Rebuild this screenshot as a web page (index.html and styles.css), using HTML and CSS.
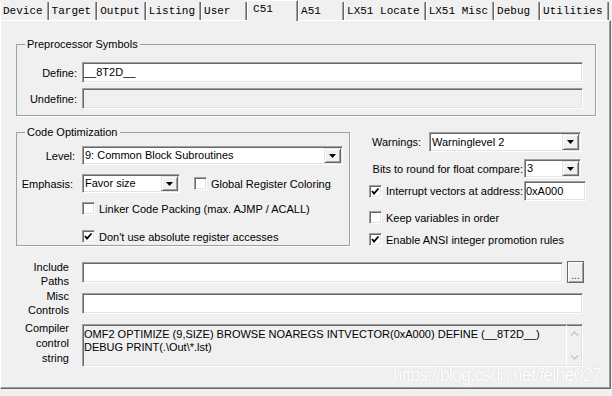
FILE: index.html
```html
<!DOCTYPE html>
<html lang="en">
<head>
    <meta charset="UTF-8">
    <title>Options for Target - C51</title>
    <link rel="stylesheet" href="styles.css">
</head>
<body>
    <div class="window">
        <div class="tabs">
            <span class="tab">Device</span>
            <span class="tab">Target</span>
            <span class="tab">Output</span>
            <span class="tab">Listing</span>
            <span class="tab">User</span>
            <span class="tab active">C51</span>
            <span class="tab">A51</span>
            <span class="tab">LX51 Locate</span>
            <span class="tab">LX51 Misc</span>
            <span class="tab">Debug</span>
            <span class="tab">Utilities</span>
        </div>

        <div class="panel">
            <fieldset class="group pre">
                <legend>Preprocessor Symbols</legend>
                <div class="form-grid">
                    <label>Define:</label>
                    <div class="field">__8T2D__</div>
                    <label>Undefine:</label>
                    <div class="field off"></div>
                </div>
            </fieldset>

            <div class="middle">
                <fieldset class="group opt">
                    <legend>Code Optimization</legend>
                    <div class="opt-row">
                        <label class="lbl-level">Level:</label>
                        <div class="field combo combo-level">
                            <span class="combo-text">9: Common Block Subroutines</span>
                            <span class="drop"><svg width="7" height="4" viewBox="0 0 7 4"><polygon points="0,0 7,0 3.5,4" fill="#000"/></svg></span>
                        </div>
                    </div>
                    <div class="opt-row emph-row">
                        <label class="lbl-emph">Emphasis:</label>
                        <div class="field combo combo-emph">
                            <span class="combo-text">Favor size</span>
                            <span class="drop"><svg width="7" height="4" viewBox="0 0 7 4"><polygon points="0,0 7,0 3.5,4" fill="#000"/></svg></span>
                        </div>
                        <div class="check global">
                            <span class="cb"></span>
                            <span>Global Register Coloring</span>
                        </div>
                    </div>
                    <div class="check linker">
                        <span class="cb"></span>
                        <span>Linker Code Packing (max. AJMP / ACALL)</span>
                    </div>
                    <div class="check absreg">
                        <span class="cb"><svg width="11" height="11" viewBox="0 0 11 11"><polyline points="2,5 4,7.5 8.5,2.5" fill="none" stroke="#000" stroke-width="1.8"/></svg></span>
                        <span>Don't use absolute register accesses</span>
                    </div>
                </fieldset>

                <div class="side">
                    <div class="side-row warn-row">
                        <label class="lbl-warn">Warnings:</label>
                        <div class="field combo combo-warn">
                            <span class="combo-text">Warninglevel 2</span>
                            <span class="drop"><svg width="7" height="4" viewBox="0 0 7 4"><polygon points="0,0 7,0 3.5,4" fill="#000"/></svg></span>
                        </div>
                    </div>
                    <div class="side-row bits-row">
                        <label>Bits to round for float compare:</label>
                        <div class="field combo combo-bits">
                            <span class="combo-text">3</span>
                            <span class="drop"><svg width="7" height="4" viewBox="0 0 7 4"><polygon points="0,0 7,0 3.5,4" fill="#000"/></svg></span>
                        </div>
                    </div>
                    <div class="side-row int-row">
                        <div class="check">
                            <span class="cb"><svg width="11" height="11" viewBox="0 0 11 11"><polyline points="2,5 4,7.5 8.5,2.5" fill="none" stroke="#000" stroke-width="1.8"/></svg></span>
                            <span>Interrupt vectors at address:</span>
                        </div>
                        <div class="field addr">0xA000</div>
                    </div>
                    <div class="check keep">
                        <span class="cb"></span>
                        <span>Keep variables in order</span>
                    </div>
                    <div class="check ansi">
                        <span class="cb"><svg width="11" height="11" viewBox="0 0 11 11"><polyline points="2,5 4,7.5 8.5,2.5" fill="none" stroke="#000" stroke-width="1.8"/></svg></span>
                        <span>Enable ANSI integer promotion rules</span>
                    </div>
                </div>
            </div>

            <div class="rows">
                <div class="row inc-row">
                    <label class="row-lbl">Include<br>Paths</label>
                    <div class="field inc"></div>
                    <button class="browse">...</button>
                </div>
                <div class="row misc-row">
                    <label class="row-lbl">Misc<br>Controls</label>
                    <div class="field misc"></div>
                </div>
                <div class="row ctl-row">
                    <label class="row-lbl">Compiler<br>control<br>string</label>
                    <div class="field off ctl">
                        <div class="ctl-text">OMF2 OPTIMIZE (9,SIZE) BROWSE NOAREGS INTVECTOR(0xA000) DEFINE (__8T2D__)<br>DEBUG PRINT(.\Out\*.lst)</div>
                        <div class="vscroll">
                            <svg width="9" height="5" viewBox="0 0 9 5"><polyline points="1,4.5 4.5,1 8,4.5" fill="none" stroke="#c4c4c4" stroke-width="1.4"/></svg>
                            <svg width="9" height="5" viewBox="0 0 9 5"><polyline points="1,0.5 4.5,4 8,0.5" fill="none" stroke="#c4c4c4" stroke-width="1.4"/></svg>
                        </div>
                    </div>
                </div>
            </div>
        </div>

        <div class="watermark">https://blog.csdn.net/feihe027</div>
    </div>
</body>
</html>
```

FILE: styles.css
```css
body {
    margin: 0;
    background-color: #f0f0f0;
    font-family: "Liberation Sans", Arial, sans-serif;
    font-size: 11px;
    color: #000;
}
.window {
    position: relative;
    width: 612px;
    height: 396px;
    overflow: hidden;
}

/* tab strip */
.tabs {
    display: flex;
    align-items: flex-end;
    height: 20px;
    font-family: "Liberation Mono", monospace;
    font-size: 11px;
}
.tab {
    box-sizing: border-box;
    height: 18px;
    min-width: 46px;
    padding: 0 5px 0 2px;
    line-height: 18px;
    border-left: 1px solid #fff;
    border-right: 1px solid #696969;
    box-shadow: inset -1px 0 #a0a0a0;
    white-space: pre;
}
.tab.active {
    position: relative;
    z-index: 1;
    height: 21px;
    min-width: 51px;
    margin-bottom: -1px;
    padding-left: 5px;
    line-height: 17px;
    border-top: 1px solid #fff;
    background-color: #f0f0f0;
}

/* property page */
.panel {
    box-sizing: border-box;
    width: 611px;
    height: 369px;
    border-top: 1px solid #fff;
    border-left: 1px solid #fff;
    border-right: 1px solid #696969;
    border-bottom: 1px solid #696969;
    box-shadow: inset -1px -1px #a0a0a0;
}

.group {
    box-sizing: border-box;
    margin: 0;
    min-width: 0;
    border: 1px solid #a0a0a0;
    box-shadow: 1px 1px 0 #fff;
}
.group legend {
    margin-left: 8px;
    padding: 0 2px;
    line-height: 14px;
}

.field {
    box-sizing: border-box;
    height: 21px;
    padding: 0 0 0 1px;
    background-color: #fff;
    border: 1px solid;
    border-color: #a0a0a0 #fff #fff #a0a0a0;
    box-shadow: inset 1px 1px 0 #696969, inset -1px -1px 0 #e3e3e3;
    line-height: 19px;
    white-space: pre;
}
.field.off {
    background-color: #f0f0f0;
}
label {
    white-space: nowrap;
}

.pre {
    width: 580px;
    margin: 16px 0 0 15px;
    padding: 11px 12px 6px 0;
}
.form-grid {
    display: grid;
    grid-template-columns: 60px 501px;
    column-gap: 5px;
    row-gap: 5px;
    align-items: center;
}
.form-grid label {
    text-align: right;
}

/* combo boxes */
.combo {
    display: flex;
    height: 19px;
    line-height: 17px;
}
.combo-text {
    flex: 1;
    padding-left: 1px;
}
.drop {
    box-sizing: border-box;
    display: flex;
    align-items: center;
    justify-content: center;
    width: 17px;
    margin: 1px;
    background-color: #f0f0f0;
    border: 1px solid;
    border-color: #e3e3e3 #696969 #696969 #e3e3e3;
    box-shadow: inset 1px 1px 0 #fff, inset -1px -1px 0 #a0a0a0;
}

/* check boxes */
.check {
    display: flex;
    align-items: center;
    gap: 4px;
    height: 13px;
    white-space: nowrap;
}
.cb {
    box-sizing: border-box;
    flex: none;
    width: 13px;
    height: 13px;
    background-color: #fff;
    border: 1px solid;
    border-color: #a0a0a0 #fff #fff #a0a0a0;
    box-shadow: inset 1px 1px 0 #696969, inset -1px -1px 0 #e3e3e3;
}
.cb svg {
    display: block;
}

/* code optimization + warnings */
.middle {
    display: flex;
    align-items: flex-start;
    margin: 9px 0 0 15px;
}
.opt {
    width: 334px;
    padding: 7px 0 2px 0;
}
.opt-row {
    display: flex;
    align-items: center;
}
.lbl-level {
    width: 58px;
    margin-right: 7px;
    text-align: right;
}
.combo-level {
    width: 261px;
}
.emph-row {
    margin-top: 9px;
}
.lbl-emph {
    width: 56px;
    margin-right: 9px;
    text-align: right;
}
.combo-emph {
    width: 98px;
}
.global {
    margin-left: 14px;
}
.linker {
    margin: 9px 0 0 65px;
}
.absreg {
    margin: 15px 0 0 65px;
}

.side {
    display: flex;
    flex-direction: column;
    width: 217px;
    margin-left: 19px;
    padding-top: 7px;
}
.side-row {
    display: flex;
    align-items: center;
}
.lbl-warn {
    width: 57px;
    padding-left: 3px;
}
.combo-warn {
    width: 152px;
    height: 20px;
    line-height: 18px;
}
.bits-row {
    justify-content: flex-end;
    width: 212px;
    margin-top: 7px;
}
.bits-row label {
    margin-right: 1px;
}
.combo-bits {
    width: 57px;
}
.int-row {
    justify-content: space-between;
    margin-top: 3px;
}
.addr {
    width: 62px;
    height: 20px;
    line-height: 18px;
}
.keep {
    margin-top: 10px;
}
.ansi {
    margin-top: 9px;
}

/* paths and control string */
.rows {
    margin-top: 14px;
}
.row {
    display: flex;
    align-items: flex-start;
}
.row-lbl {
    width: 68px;
    margin-right: 13px;
    text-align: right;
    line-height: 14px;
}
.inc {
    width: 481px;
    margin-top: 2px;
}
.browse {
    box-sizing: border-box;
    width: 17px;
    height: 22px;
    margin: 1px 0 0 4px;
    padding: 6px 0 0 0;
    font-family: "Liberation Sans", sans-serif;
    font-size: 10px;
    color: #402060;
    background-color: #f0f0f0;
    border: 1px solid #696969;
    box-shadow: inset 1px 1px 0 #fff, inset -1px -1px 0 #a0a0a0;
}
.misc-row {
    margin-top: 1px;
}
.misc {
    width: 501px;
    margin-top: 4px;
}
.ctl-row {
    margin-top: 4px;
}
.ctl-row .row-lbl {
    line-height: 15px;
}
.ctl {
    display: flex;
    width: 501px;
    height: 43px;
    margin-top: 3px;
    padding: 0;
    line-height: 13px;
}
.ctl-text {
    flex: 1;
    padding: 3px 0 0 1px;
}
.vscroll {
    display: flex;
    flex-direction: column;
    justify-content: space-between;
    align-items: center;
    width: 15px;
    padding: 6px 0 6px 0;
    border-left: 1px solid #fff;
}
.vscroll svg {
    display: block;
}

.watermark {
    position: absolute;
    right: 11px;
    bottom: 10px;
    font-size: 18px;
    letter-spacing: -0.9px;
    color: #fff;
    text-shadow: 0 0 1px #c4c4c4;
    white-space: nowrap;
}
```
